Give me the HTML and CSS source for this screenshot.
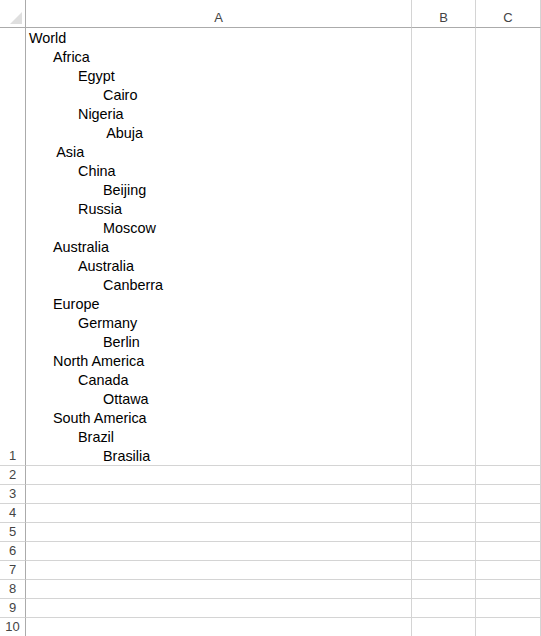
FILE: index.html
```html
<!DOCTYPE html>
<html lang="en">
<head>
    <meta charset="UTF-8">
    <title>Sheet</title>
    <link rel="stylesheet" href="styles.css">
</head>
<body>
    <div class="sheet">
        <div class="corner"><span class="tri"></span></div>
        <div class="col-head">A</div>
        <div class="col-head">B</div>
        <div class="col-head">C</div>

        <div class="row-head tall">1</div>
        <div class="cell tall text-cell">
            <div class="line">World</div>
            <div class="line l1">Africa</div>
            <div class="line l2">Egypt</div>
            <div class="line l3">Cairo</div>
            <div class="line l2">Nigeria</div>
            <div class="line l3"> Abuja</div>
            <div class="line l1"> Asia</div>
            <div class="line l2">China</div>
            <div class="line l3">Beijing</div>
            <div class="line l2">Russia</div>
            <div class="line l3">Moscow</div>
            <div class="line l1">Australia</div>
            <div class="line l2">Australia</div>
            <div class="line l3">Canberra</div>
            <div class="line l1">Europe</div>
            <div class="line l2">Germany</div>
            <div class="line l3">Berlin</div>
            <div class="line l1">North America</div>
            <div class="line l2">Canada</div>
            <div class="line l3">Ottawa</div>
            <div class="line l1">South America</div>
            <div class="line l2">Brazil</div>
            <div class="line l3">Brasilia</div>
        </div>
        <div class="cell tall"></div>
        <div class="cell tall"></div>

        <div class="row-head">2</div><div class="cell"></div><div class="cell"></div><div class="cell"></div>
        <div class="row-head">3</div><div class="cell"></div><div class="cell"></div><div class="cell"></div>
        <div class="row-head">4</div><div class="cell"></div><div class="cell"></div><div class="cell"></div>
        <div class="row-head">5</div><div class="cell"></div><div class="cell"></div><div class="cell"></div>
        <div class="row-head">6</div><div class="cell"></div><div class="cell"></div><div class="cell"></div>
        <div class="row-head">7</div><div class="cell"></div><div class="cell"></div><div class="cell"></div>
        <div class="row-head">8</div><div class="cell"></div><div class="cell"></div><div class="cell"></div>
        <div class="row-head">9</div><div class="cell"></div><div class="cell"></div><div class="cell"></div>
        <div class="row-head">10</div><div class="cell"></div><div class="cell"></div><div class="cell"></div>
    </div>
</body>
</html>
```

FILE: styles.css
```css
*{
    margin: 0;
    padding: 0;
    box-sizing: border-box;
}
body{
    background-color: white;
    font-family: "Liberation Sans", Arial, sans-serif;
    overflow: hidden;
}
.sheet{
    display: grid;
    grid-template-columns: 26px 386px 64px 65px;
    grid-template-rows: 28px 438px repeat(9, 19px);
}
.corner{
    position: relative;
    border-right: 1px solid #ababab;
    border-bottom: 1px solid #ababab;
}
.tri{
    position: absolute;
    right: 3px;
    bottom: 3px;
    width: 0;
    height: 0;
    border-left: 12px solid transparent;
    border-bottom: 12px solid #dfdfdf;
}
.col-head{
    border-right: 1px solid #d4d4d4;
    border-bottom: 1px solid #ababab;
    color: #444;
    font-size: 13px;
    text-align: center;
    padding-top: 10px;
}
.row-head{
    border-right: 1px solid #ababab;
    border-bottom: 1px solid #d4d4d4;
    color: #444;
    font-size: 13px;
    text-align: center;
    line-height: 18px;
    display: flex;
    align-items: flex-end;
    justify-content: center;
}
.cell{
    border-right: 1px solid #d4d4d4;
    border-bottom: 1px solid #d4d4d4;
}
.text-cell{
    padding-top: 1px;
    overflow: hidden;
}
.line{
    font-size: 14.4px;
    line-height: 19px;
    color: #000;
    white-space: pre;
    padding-left: 3px;
}
.l1{
    padding-left: 27px;
}
.l2{
    padding-left: 52px;
}
.l3{
    padding-left: 77px;
}
```
